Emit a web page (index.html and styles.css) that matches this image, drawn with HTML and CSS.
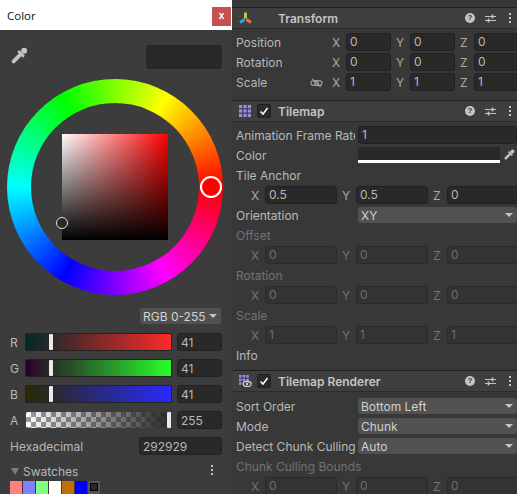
FILE: index.html
```html
<!DOCTYPE html>
<html lang="en">
<head>
<meta charset="utf-8">
<title>Color and Inspector</title>
<link rel="stylesheet" href="styles.css">
</head>
<body>
<div class="app">
  <section class="picker">
    <header class="titlebar"><span class="title">Color</span><button class="close">x</button></header>
    <div class="preview-row">
      <svg class="pipette" viewBox="0 0 16 16"><path d="M7.800 8.200L2.500 13.500" stroke="#c4c4c4" stroke-width="3.600" stroke-linecap="round"/><path d="M6.800 3.800l5.400 5.400" stroke="#c4c4c4" stroke-width="2.600"/><circle cx="12.400" cy="3.600" r="2.800" fill="#c4c4c4"/></svg>
      <div class="preview"></div>
    </div>
    <div class="wheel-wrap">
      <div class="wheel"><div class="wheel-hole"></div></div>
      <div class="sv"><span class="sv-knob"></span></div>
      <span class="hue-knob"></span>
    </div>
    <div class="mode-row"><div class="mode">RGB 0-255<i class="caret"></i></div></div>
    <div class="slider-row"><span class="ch">R</span><div class="track r"><span class="thumb t41"></span></div><div class="num">41</div></div>
    <div class="slider-row"><span class="ch">G</span><div class="track g"><span class="thumb t41"></span></div><div class="num">41</div></div>
    <div class="slider-row"><span class="ch">B</span><div class="track b"><span class="thumb t41"></span></div><div class="num">41</div></div>
    <div class="slider-row"><span class="ch">A</span><div class="track a"><span class="thumb t255"></span></div><div class="num">255</div></div>
    <div class="hex-row"><span class="hex-label">Hexadecimal</span><div class="num hex">292929</div></div>
    <div class="swatch-head"><i class="tri"></i><span>Swatches</span><span class="vdots"><i></i><i></i><i></i></span></div>
    <div class="swatches">
      <i class="s1"></i><i class="s2"></i><i class="s3"></i><i class="s4"></i><i class="s5"></i><i class="s6"></i><i class="s7"><b></b></i>
    </div>
  </section>

  <section class="inspector">
    <div class="comp-head first">
      <svg class="cicon tf" viewBox="0 0 13 13"><path d="M6.500 0.500V6.500" stroke="#9ad24a" stroke-width="3"/><path d="M5.500 7.500L1 10.500" stroke="#3f9fe0" stroke-width="3"/><path d="M7.500 7.500L12 10.500" stroke="#e8764a" stroke-width="3"/></svg>
      <span class="spacer-check"></span><span class="comp-name">Transform</span>
      <span class="head-tools"><span class="help">?</span><svg class="sliders" viewBox="0 0 11 11"><path d="M0 3.500h11M0 7.500h11" stroke="#c4c4c4"/><path d="M7.500 1.500v4M3.500 5.500v4" stroke="#c4c4c4" stroke-width="1.600"/></svg><span class="vdots"><i></i><i></i><i></i></span></span>
    </div>
    <div class="xyz-row"><span class="lbl">Position</span><span class="axes"><span class="ax">X</span><span class="f">0</span><span class="ax">Y</span><span class="f">0</span><span class="ax">Z</span><span class="f">0</span></span></div>
    <div class="xyz-row"><span class="lbl">Rotation</span><span class="axes"><span class="ax">X</span><span class="f">0</span><span class="ax">Y</span><span class="f">0</span><span class="ax">Z</span><span class="f">0</span></span></div>
    <div class="xyz-row"><span class="lbl">Scale</span>
      <svg class="unlink" viewBox="0 0 14 10"><rect x="1" y="2.500" width="8" height="5" rx="2.500" fill="none" stroke="#a8a8a8" stroke-width="1.100"/><rect x="5" y="2.500" width="8" height="5" rx="2.500" fill="none" stroke="#a8a8a8" stroke-width="1.100"/><path d="M2.500 0.500l9 9" stroke="#a8a8a8" stroke-width="1.100"/></svg>
      <span class="axes"><span class="ax">X</span><span class="f">1</span><span class="ax">Y</span><span class="f">1</span><span class="ax">Z</span><span class="f">1</span></span></div>

    <div class="comp-head second">
      <svg class="cicon grid" viewBox="0 0 12 12"><g fill="#9f87e6"><rect x="0" y="0" width="3.200" height="3.200"/><rect x="4.400" y="0" width="3.200" height="3.200"/><rect x="8.800" y="0" width="3.200" height="3.200"/><rect x="0" y="4.400" width="3.200" height="3.200"/><rect x="4.400" y="4.400" width="3.200" height="3.200"/><rect x="8.800" y="4.400" width="3.200" height="3.200"/><rect x="0" y="8.800" width="3.200" height="3.200"/><rect x="4.400" y="8.800" width="3.200" height="3.200"/><rect x="8.800" y="8.800" width="3.200" height="3.200"/></g></svg>
      <span class="check"><svg viewBox="0 0 12 12"><path d="M2.500 6.500l2.500 2.500 4.500-6" fill="none" stroke="#fff" stroke-width="1.500"/></svg></span><span class="comp-name">Tilemap</span>
      <span class="head-tools"><span class="help">?</span><svg class="sliders" viewBox="0 0 11 11"><path d="M0 3.500h11M0 7.500h11" stroke="#c4c4c4"/><path d="M7.500 1.500v4M3.500 5.500v4" stroke="#c4c4c4" stroke-width="1.600"/></svg><span class="vdots"><i></i><i></i><i></i></span></span>
    </div>
    <div class="prop-row"><span class="lbl clip">Animation Frame Rate</span><span class="f val">1</span></div>
    <div class="prop-row"><span class="lbl">Color</span><div class="colorfield"><div class="cbar"></div>
      <svg class="pip-small" viewBox="0 0 16 16"><path d="M7.800 8.200L2.500 13.500" stroke="#c4c4c4" stroke-width="3.600" stroke-linecap="round"/><path d="M6.800 3.800l5.400 5.400" stroke="#c4c4c4" stroke-width="2.600"/><circle cx="12.400" cy="3.600" r="2.800" fill="#c4c4c4"/></svg></div></div>
    <div class="prop-row"><span class="lbl">Tile Anchor</span></div>
    <div class="sub-row"><span class="ax">X</span><span class="f">0.5</span><span class="ax">Y</span><span class="f">0.5</span><span class="ax">Z</span><span class="f">0</span></div>
    <div class="prop-row"><span class="lbl">Orientation</span><div class="dd">XY<i class="caret"></i></div></div>
    <div class="prop-row dim"><span class="lbl">Offset</span></div>
    <div class="sub-row dim"><span class="ax">X</span><span class="f">0</span><span class="ax">Y</span><span class="f">0</span><span class="ax">Z</span><span class="f">0</span></div>
    <div class="prop-row dim"><span class="lbl">Rotation</span></div>
    <div class="sub-row dim"><span class="ax">X</span><span class="f">0</span><span class="ax">Y</span><span class="f">0</span><span class="ax">Z</span><span class="f">0</span></div>
    <div class="prop-row dim"><span class="lbl">Scale</span></div>
    <div class="sub-row dim"><span class="ax">X</span><span class="f">1</span><span class="ax">Y</span><span class="f">1</span><span class="ax">Z</span><span class="f">1</span></div>
    <div class="prop-row"><span class="lbl">Info</span></div>

    <div class="comp-head third">
      <svg class="cicon eye" viewBox="0 0 13 12"><g fill="#9f87e6"><rect x="0" y="0" width="2.600" height="2.600"/><rect x="3.600" y="0" width="2.600" height="2.600"/><rect x="7.200" y="0" width="2.600" height="2.600"/><rect x="0" y="3.600" width="2.600" height="2.600"/><rect x="3.600" y="3.600" width="2.600" height="2.600"/><rect x="7.200" y="3.600" width="2.600" height="2.600"/><rect x="0" y="7.200" width="2.600" height="2.600"/></g><ellipse cx="8.200" cy="9" rx="4" ry="2.600" fill="#3e3e3e" stroke="#d8d8d8" stroke-width="1.200"/><circle cx="8.200" cy="9" r="1.200" fill="#d8d8d8"/></svg>
      <span class="check"><svg viewBox="0 0 12 12"><path d="M2.500 6.500l2.500 2.500 4.500-6" fill="none" stroke="#fff" stroke-width="1.500"/></svg></span><span class="comp-name">Tilemap Renderer</span>
      <span class="head-tools"><span class="help">?</span><svg class="sliders" viewBox="0 0 11 11"><path d="M0 3.500h11M0 7.500h11" stroke="#c4c4c4"/><path d="M7.500 1.500v4M3.500 5.500v4" stroke="#c4c4c4" stroke-width="1.600"/></svg><span class="vdots"><i></i><i></i><i></i></span></span>
    </div>
    <div class="prop-row"><span class="lbl">Sort Order</span><div class="dd">Bottom Left<i class="caret"></i></div></div>
    <div class="prop-row"><span class="lbl">Mode</span><div class="dd">Chunk<i class="caret"></i></div></div>
    <div class="prop-row"><span class="lbl">Detect Chunk Culling</span><div class="dd">Auto<i class="caret"></i></div></div>
    <div class="prop-row dim"><span class="lbl">Chunk Culling Bounds</span></div>
    <div class="sub-row dim"><span class="ax">X</span><span class="f">0</span><span class="ax">Y</span><span class="f">0</span><span class="ax">Z</span><span class="f">0</span></div>
  </section>
</div>
</body>
</html>
```
FILE: styles.css
```css
* { box-sizing: border-box; }
html, body { margin: 0; height: 100%; overflow: hidden; }
body { background: #383838; font-family: Inter, "Noto Sans", sans-serif; font-size: 12px; color: #b8b8b8; }
.app { display: flex; width: 517px; height: 494px; overflow: hidden; }

.picker { width: 232px; height: 494px; flex: none; background: #3c3c3c; overflow: hidden; }
.titlebar { height: 30px; background: #fff; display: flex; align-items: center; justify-content: space-between; padding: 0 1px 0 7px; }
.title { color: #111; font: 11.500px "Open Sans", sans-serif; }
.close { width: 19px; height: 19px; margin: 3px 0 0; padding: 0 0 2px; border: 0; background: #c75050; color: #fff; font: bold 10px "Liberation Sans", sans-serif; }
.preview-row { display: flex; justify-content: space-between; padding: 15px 10px 0 11px; height: 49px; }
.pipette { width: 17px; height: 17px; margin-top: 2px; }
.preview { width: 76px; height: 24px; background: #292929; border-radius: 3px; }
.wheel-wrap { position: relative; height: 226px; }
.wheel { position: absolute; left: 7px; top: 0; width: 216px; height: 216px; border-radius: 50%; background: conic-gradient(from 90deg, #f00, #f0f, #00f, #0ff, #0f0, #ff0, #f00); display: flex; align-items: center; justify-content: center; }
.wheel-hole { width: 168px; height: 168px; border-radius: 50%; background: #3c3c3c; }
.sv { position: absolute; left: 62px; top: 55px; width: 106px; height: 106px; background: linear-gradient(to top, #000, rgba(0,0,0,0)), linear-gradient(to right, #fff, #f00); }
.sv-knob { position: absolute; left: -6px; top: 83px; width: 12px; height: 12px; border: 1px solid #ddd; border-radius: 50%; background: #292929; }
.hue-knob { position: absolute; left: 200px; top: 97px; width: 22px; height: 22px; border: 2px solid #fff; border-radius: 50%; background: #f00; }
.mode-row { display: flex; justify-content: flex-end; padding-right: 11px; height: 25px; margin-top: 3px; }
.mode { width: 81px; height: 16px; background: #515151; border-radius: 3px; color: #d2d2d2; display: flex; align-items: center; justify-content: space-between; padding: 0 4px 0 3px; }
.caret { width: 0; height: 0; border-left: 4px solid transparent; border-right: 4px solid transparent; border-top: 4px solid #c4c4c4; }
.slider-row { display: flex; align-items: center; height: 18px; margin-bottom: 8px; padding-left: 10px; }
.ch { width: 15px; }
.track { position: relative; width: 147px; height: 18px; border: 1px solid #222; border-radius: 2px; }
.track.r { background: linear-gradient(to right, #002929, #ff2929); }
.track.g { background: linear-gradient(to right, #290029, #29ff29); }
.track.b { background: linear-gradient(to right, #292900, #2929ff); }
.track.a { border: 0; width: 145px; height: 16px; margin: 0 1px; background: linear-gradient(to right, rgba(41,41,41,0), #292929), conic-gradient(#999 25%, #fff 0 50%, #999 0 75%, #fff 0) 0 0 / 10px 10px; }
.thumb { position: absolute; top: 0; bottom: 0; width: 4px; background: #eaeaea; border-radius: 1px; }
.thumb.t41 { left: 23px; }
.thumb.t255 { right: 0; }
.num { margin-left: 5px; width: 45px; height: 18px; background: #292929; border: 1px solid #212121; border-radius: 3px; padding: 0 3px; line-height: 17px; flex: none; }
.hex-row { display: flex; align-items: center; height: 18px; padding-left: 10px; margin-bottom: 8px; }
.hex-label { width: 129px; }
.num.hex { margin: 0; width: 83px; }
.swatch-head { display: flex; align-items: center; height: 17px; padding: 0 19px 0 11px; gap: 4px; }
.tri { width: 0; height: 0; border-left: 4px solid transparent; border-right: 4px solid transparent; border-top: 7px solid #7d7d7d; }
.vdots { display: inline-flex; flex-direction: column; gap: 2px; width: 2px; flex: none; }
.vdots i { display: block; width: 2px; height: 2px; background: #c4c4c4; }
.swatch-head .vdots { margin-left: auto; margin-top: -4px; }
.swatches { display: flex; padding-left: 10px; margin-top: 1px; }
.swatches i { display: block; width: 12px; height: 13px; margin-right: 1px; flex: none; }
.s1 { background: #ff8080; } .s2 { background: #8080ff; } .s3 { background: #80ff80; } .s4 { background: #fff; }
.s5 { background: #c07000; } .s6 { background: #0000ff; }
.s7 { background: #555; padding: 2px; } .s7 b { display: block; width: 8px; height: 8px; background: #292929; border: 1px solid #000; }

.inspector { width: 285px; flex: none; background: #383838; overflow: hidden; }
.comp-head { height: 22px; background: #3e3e3e; border-top: 1px solid #202020; border-bottom: 1px solid #2c2c2c; display: flex; align-items: center; padding-left: 7px; margin-bottom: 3px; }
.comp-head.first { margin-top: 7px; }
.comp-head.second { margin-top: 8px; }
.comp-head.third { margin-top: 5px; margin-bottom: 4px; }
.cicon { flex: none; display: block; }
.cicon.tf { width: 13px; height: 13px; }
.cicon.grid { width: 12px; height: 12px; }
.cicon.eye { width: 13px; height: 12px; margin-right: -1px; }
.spacer-check { width: 20px; margin-left: 0; flex: none; }
.check { width: 14px; height: 14px; margin-left: 6px; background: #2a2a2a; border: 1px solid #202020; border-radius: 2px; display: block; flex: none; }
.check svg { display: block; width: 12px; height: 12px; }
.comp-name { font-weight: 600; margin-left: 7px; color: #c4c4c4; }
.first .comp-name { margin-left: 6px; }
.head-tools { margin-left: auto; display: flex; align-items: center; padding-right: 6px; }
.help { width: 10px; height: 10px; border-radius: 50%; background: #c4c4c4; color: #333; font: bold 8px/10px "Liberation Sans", sans-serif; text-align: center; margin-right: 10px; }
.sliders { width: 11px; height: 11px; margin-right: 13px; }
.xyz-row { display: flex; align-items: center; height: 20px; padding-left: 4px; position: relative; }
.lbl { white-space: nowrap; flex: none; }
.xyz-row .lbl { width: 96px; }
.axes { display: flex; align-items: center; width: 190px; flex: none; }
.axes .ax { width: 14px; }
.axes .f { width: 45px; margin-right: 5px; }
.ax { color: #a9a9a9; flex: none; }
.f { height: 18px; background: #292929; border: 1px solid #212121; border-radius: 3px; padding: 0 3px; line-height: 16px; flex: none; }
.unlink { position: absolute; left: 78px; top: 6px; width: 13px; height: 10px; }
.prop-row { display: flex; align-items: center; height: 20px; padding-left: 4px; }
.prop-row .lbl { width: 122px; }
.prop-row .lbl.clip { width: 119px; margin-right: 3px; overflow: hidden; }
.prop-row .lbl:only-child { width: auto; }
.f.val, .dd, .colorfield { width: 159px; flex: none; }
.dd { height: 16px; background: #515151; border-radius: 3px; display: flex; align-items: center; justify-content: space-between; padding: 0 4px 0 3px; color: #d0d0d0; }
.colorfield { position: relative; height: 16px; }
.cbar { width: 142px; height: 16px; background: #292929; border-bottom: 3px solid #fff; border-radius: 2px 0 0 0; }
.pip-small { position: absolute; right: 2px; top: 2px; width: 11px; height: 11px; }
.sub-row { display: flex; align-items: center; height: 20px; padding-left: 19px; }
.sub-row .f { width: 72px; margin-left: 5px; margin-right: 5px; }
.sub-row .ax { width: 9px; }
.sub-row .f:last-child { margin-right: 0; }
.dim .lbl, .dim .ax { color: #737373; }
.dim .f { color: #6e6e6e; background: #333; border-color: #2a2a2a; }
```
